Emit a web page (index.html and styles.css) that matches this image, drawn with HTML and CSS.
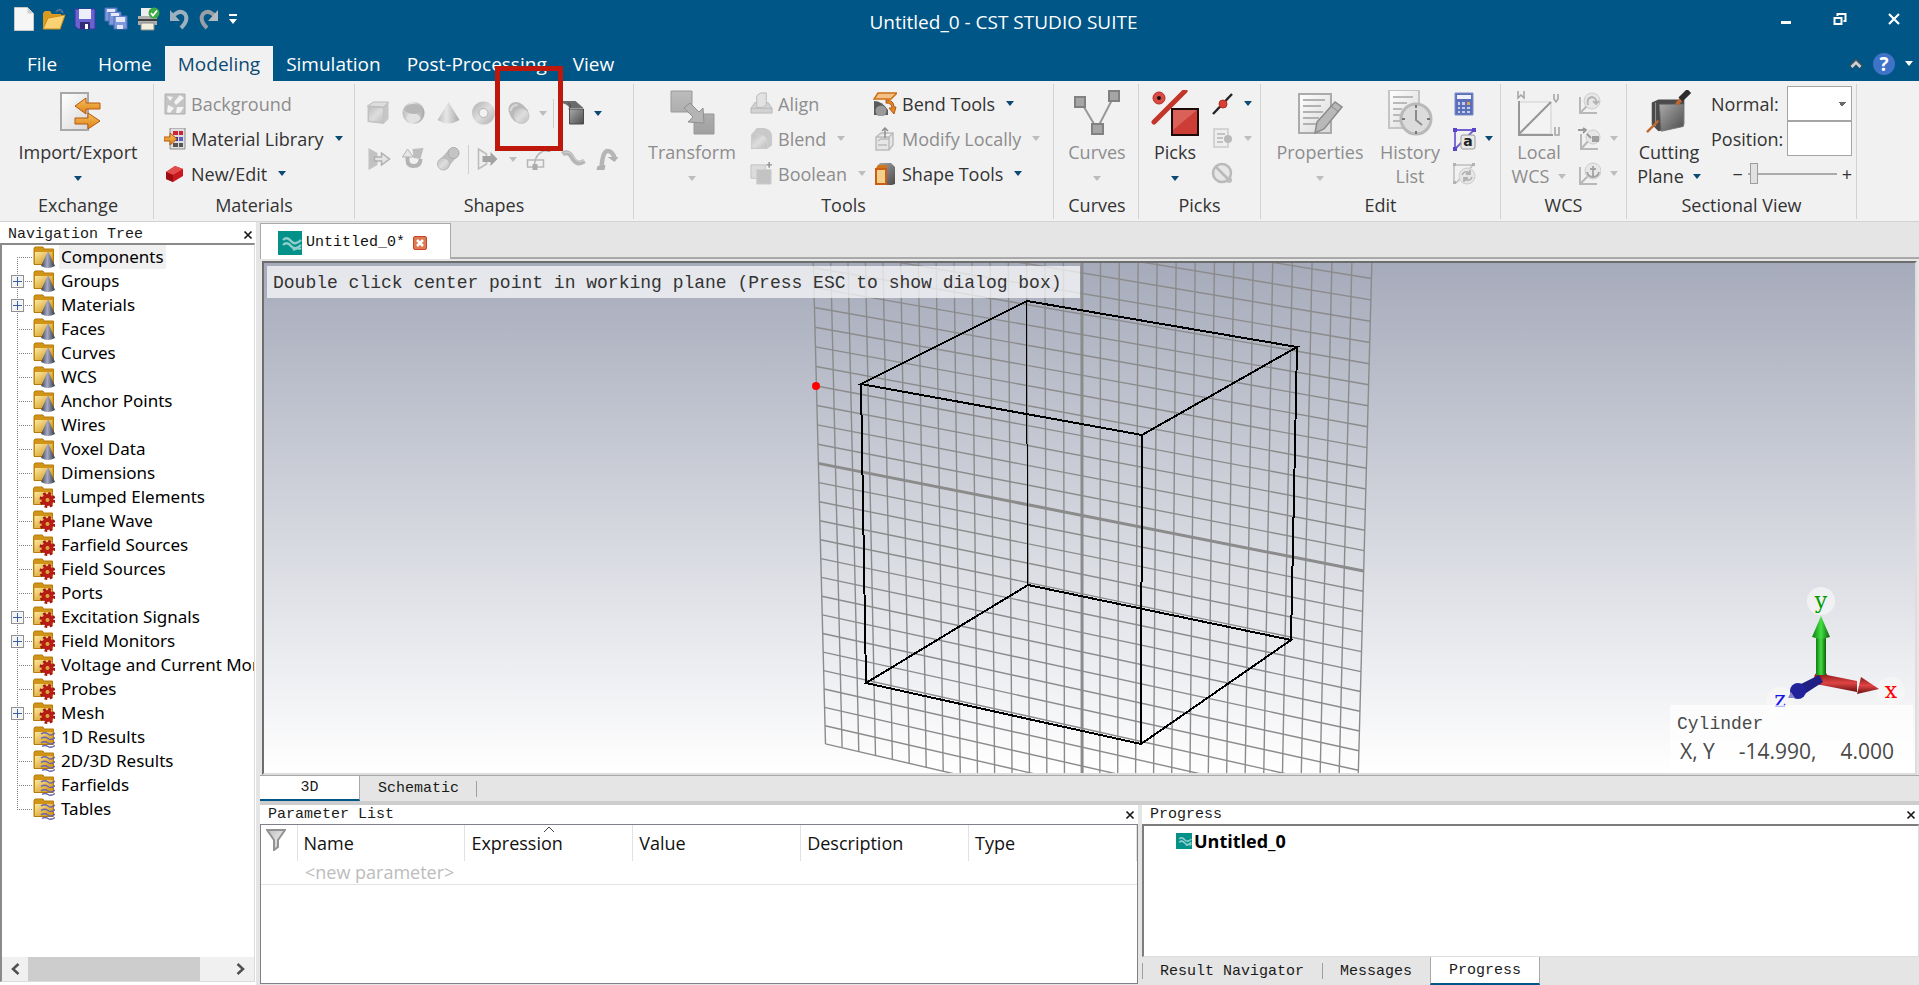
FILE: index.html
```
<!DOCTYPE html>
<html lang="en">
<head>
    <meta charset="UTF-8">
    <meta name="viewport" content="width=device-width, initial-scale=1.0">
    <title>Untitled_0 - CST STUDIO SUITE</title>
    <link rel="stylesheet" href="styles.css">
</head>
<body>
    <!-- shared gradients and symbols -->
    <svg class="defs" width="0" height="0" aria-hidden="true">
        <defs>
            <linearGradient id="g-light" x1="0" y1="0" x2="1" y2="1"><stop offset="0" stop-color="#bdbdbd"/><stop offset="0.5" stop-color="#dedede"/><stop offset="1" stop-color="#bcbcbc"/></linearGradient>
            <linearGradient id="g-side" x1="0" y1="0" x2="1" y2="0"><stop offset="0" stop-color="#bebebe"/><stop offset="0.4" stop-color="#e6e6e6"/><stop offset="1" stop-color="#a9a9a9"/></linearGradient>
            <linearGradient id="g-mid" x1="0" y1="0" x2="0" y2="1"><stop offset="0" stop-color="#bcbcbc"/><stop offset="1" stop-color="#a0a0a0"/></linearGradient>
            <linearGradient id="g-dark" x1="0" y1="0" x2="1" y2="1"><stop offset="0" stop-color="#aaaaaa"/><stop offset="1" stop-color="#4c4c4c"/></linearGradient>
            <linearGradient id="g-paper" x1="0" y1="0" x2="1" y2="1"><stop offset="0" stop-color="#ffffff"/><stop offset="1" stop-color="#d8d8d8"/></linearGradient>
            <linearGradient id="g-orange" x1="0" y1="0" x2="0" y2="1"><stop offset="0" stop-color="#f5bf5c"/><stop offset="1" stop-color="#dc8316"/></linearGradient>
            <linearGradient id="g-folder" x1="0" y1="0" x2="1" y2="1"><stop offset="0" stop-color="#fbe9a6"/><stop offset="1" stop-color="#cf8f08"/></linearGradient>
            <linearGradient id="g-cone" x1="0" y1="0" x2="1" y2="0"><stop offset="0" stop-color="#3e4047"/><stop offset="0.45" stop-color="#a5aac6"/><stop offset="1" stop-color="#34363c"/></linearGradient>
            <linearGradient id="g-sky" x1="0" y1="0" x2="0" y2="1"><stop offset="0" stop-color="#a6abbb"/><stop offset="1" stop-color="#ffffff"/></linearGradient>
            <linearGradient id="g-green" x1="0" y1="0" x2="1" y2="0"><stop offset="0" stop-color="#127a12"/><stop offset="0.5" stop-color="#41e041"/><stop offset="1" stop-color="#0c5e0c"/></linearGradient>
            <linearGradient id="g-red" x1="0" y1="0" x2="0" y2="1"><stop offset="0" stop-color="#8c1c1c"/><stop offset="0.5" stop-color="#e04444"/><stop offset="1" stop-color="#6a1010"/></linearGradient>
            <symbol id="folder-cone" viewBox="0 0 22 22">
                <path d="M1 2.500L2 1h8l1 2h9.500v15.500H1z" fill="#d29416" stroke="#b57a08"/>
                <path d="M2 6h17.500v12L2 18z" fill="url(#g-folder)"/>
                <path d="M15 5L22 20q-7 4-14 0z" fill="url(#g-cone)"/>
            </symbol>
            <symbol id="folder-gear" viewBox="0 0 22 22">
                <path d="M.5 2.500L1.500 1h8l1 2h9v15.500H.5z" fill="#d29416" stroke="#b57a08"/>
                <path d="M1.500 6H19v12H1.500z" fill="url(#g-folder)"/>
                <circle cx="14.500" cy="14" r="6.500" fill="none" stroke="#a51410" stroke-width="3" stroke-dasharray="2.600 2.505"/>
                <circle cx="14.500" cy="14" r="4" fill="none" stroke="#b81c17" stroke-width="4"/>
            </symbol>
            <symbol id="folder-wave" viewBox="0 0 22 22">
                <path d="M1 2.500L2 1h8l1 2h9.500v15.500H1z" fill="#d29416" stroke="#b57a08"/>
                <path d="M2 6h17.500v12L2 18z" fill="url(#g-folder)"/>
                <path d="M8 8q3.500-2.500 7 0t7-1M8 12.500q3.500-2.500 7 0t7-1M8 17q3.500-2.500 7 0t7-1M9 20.500q3-2 6 0t7-1" fill="none" stroke="#6c66ae" stroke-width="1.400"/>
            </symbol>
            <symbol id="logo" viewBox="0 0 24 24">
                <path d="M0 0h24v24H0z" fill="#04918a"/>
                <path d="M5 9q4-4 8 1t10-1M5 14q4-4 8 1t10-1M15 19q4-3 8-1" fill="none" stroke="#8fcfcb" stroke-width="2.400"/>
            </symbol>
            <symbol id="cross" viewBox="0 0 10 10"><path d="M1.500 1.500l7 7M8.500 1.500l-7 7" fill="none" stroke="currentColor" stroke-width="1.700"/></symbol>
        </defs>
    </svg>

    <header class="titlebar">
        <div class="caption">
            <div class="quick">
                <button aria-label="New"><svg width="20" height="24" viewBox="0 0 20 24"><path d="M.5.500h13l6 6v17H.5z" fill="#f6f6f6" stroke="#c9c9c9"/><path d="M13.500.500v6h6z" fill="#cfcfcf"/></svg></button>
                <button aria-label="Open"><svg width="24" height="24" viewBox="0 0 24 24"><path d="M1 22V6l2-2h5l2 3h9v15z" fill="#d99a20"/><path d="M1 22L6 11l17-3-5 14z" fill="#f9d273" stroke="#cf8c12"/><path d="M14 5q4-5 7 1" fill="none" stroke="#4a7598" stroke-width="2"/></svg></button>
                <button aria-label="Save"><svg width="22" height="22" viewBox="0 0 22 22"><path d="M1 1h20v20H4l-3-3z" fill="#6a62cf" stroke="#3c349c"/><path d="M5 1h12v10H5z" fill="#edf0fb"/><path d="M6 14h10v7H6z" fill="#332b78"/><path d="M11 16h3v5h-3z" fill="#fff"/></svg></button>
                <button aria-label="Save all"><svg width="24" height="24" viewBox="0 0 24 24"><g stroke="#4e6fc0" fill="#7f97db"><path d="M1 1h12v13H1z"/><path d="M5 5h12v13H5z"/><path d="M10 9h13v13H10z"/></g><path d="M3 2h8v3H3zM7 6h8v3H7zM12 10h9v5h-9zM13 18h6v4h-6z" fill="#e4e9fa"/></svg></button>
                <button aria-label="Print"><svg width="24" height="24" viewBox="0 0 24 24"><path d="M5 1h11v9H5z" fill="#eee"/><path d="M2 9h19v9H2z" fill="#aeaeae"/><path d="M2 12h19v2H2z" fill="#3e3e3e"/><path d="M5 16h13v7H5z" fill="#f2efdc" stroke="#888"/><circle cx="18" cy="6" r="5.500" fill="#3cab43"/><path d="M15 6l2 2.500 4-5" fill="none" stroke="#fff" stroke-width="1.800"/></svg></button>
                <button aria-label="Undo"><svg width="22" height="22" viewBox="0 0 22 22"><path d="M5 8q7-7 12-2 4 6-4 14" fill="none" stroke="#9db0bd" stroke-width="4"/><path d="M2 2v11h10z" fill="#9db0bd"/></svg></button>
                <button aria-label="Redo"><svg width="22" height="22" viewBox="0 0 22 22"><path d="M17 8q-7-7-12-2-4 6 4 14" fill="none" stroke="#9a9fa5" stroke-width="4"/><path d="M20 2v11H10z" fill="#b4bac0"/></svg></button>
                <button aria-label="Customize toolbar"><svg width="10" height="12" viewBox="0 0 10 12"><path d="M1 1h8v2H1zM1 6h8L5 11z" fill="#fff"/></svg></button>
            </div>
            <h1 class="title">Untitled_0 - CST STUDIO SUITE</h1>
            <div class="window-buttons">
                <button aria-label="Minimize"><svg width="14" height="14" viewBox="0 0 14 14"><path d="M2 9h10v3H2z" fill="#fff"/></svg></button>
                <button aria-label="Restore"><svg width="14" height="14" viewBox="0 0 14 14"><path d="M4.500 4V2h8v7h-2M1.500 6h7v6h-7zM1 6h8M4 2h9" fill="none" stroke="#fff" stroke-width="2"/></svg></button>
                <button aria-label="Close"><svg width="14" height="14" viewBox="0 0 14 14"><path d="M2 2l10 10M12 2L2 12" stroke="#fff" stroke-width="2.200"/></svg></button>
            </div>
        </div>
        <nav class="tabs">
            <a class="tab file" href="#">File</a>
            <a class="tab" href="#">Home</a>
            <a class="tab active" href="#">Modeling</a>
            <a class="tab" href="#">Simulation</a>
            <a class="tab" href="#">Post-Processing</a>
            <a class="tab" href="#">View</a>
            <div class="help">
                <button aria-label="Collapse ribbon"><svg width="14" height="12" viewBox="0 0 14 12"><path d="M2 9l5-5 5 5" fill="none" stroke="#4e4e4e" stroke-width="5"/><path d="M2.500 9L7 4.500 11.500 9" fill="none" stroke="#c3d6e0" stroke-width="2.500"/></svg></button>
                <button aria-label="Help" class="help-icon">?</button>
                <button aria-label="Help menu"><svg width="8" height="5" viewBox="0 0 8 5"><path d="M0 0h8L4 5z" fill="#fff"/></svg></button>
            </div>
        </nav>
    </header>

    <section class="ribbon">
        <div class="group g-exchange">
            <div class="group-body">
                <button class="big wide">
                    <svg width="46" height="46" viewBox="0 0 46 46"><path d="M6 3h27v37H6z" fill="url(#g-paper)" stroke="#a8a8a8" stroke-width="2"/><path d="M45 13H31V8l-11 8 11 8v-5h14z" fill="url(#g-orange)" stroke="#b9560e"/><path d="M20 28h13v-5l12 8-12 8v-5H20z" fill="url(#g-orange)" stroke="#b9560e"/></svg>
                    <span>Import/Export</span>
                    <i class="caret low"></i>
                </button>
            </div>
            <h2>Exchange</h2>
        </div>

        <div class="group g-materials">
            <div class="group-body">
                <div class="stack">
                    <button class="row" disabled><svg width="22" height="22" viewBox="0 0 22 22"><path d="M1 1h20v20H1z" fill="#c4c4c4" stroke="#b0b0b0"/><path d="M3 3l6 1-3 4zM10 9l6-7 4 3-8 7zM4 12l6 3-4 5-3-1zM13 14h7l-4 6h-4z" fill="#f4f4f4"/></svg><span>Background</span></button>
                    <button class="row"><svg width="22" height="22" viewBox="0 0 22 22"><path d="M6 0h15v21H6z" fill="#dedede" stroke="#8c8c8c"/><path d="M9 3h5v4H9zM15 3h4v4h-4z" fill="#cb2433"/><path d="M9 9h5v4H9z" fill="#3a3a9a"/><path d="M15 9h4v4h-4z" fill="#5960bd"/><path d="M9 15h5v4H9zM15 15h4v4h-4z" fill="#555"/><path d="M0 9h6V5l7 6-7 6v-4H0z" fill="url(#g-orange)" stroke="#b9560e"/></svg><span>Material Library</span><i class="caret"></i></button>
                    <button class="row"><svg width="22" height="22" viewBox="0 0 22 22"><path d="M2 9l9-6 8 3v7l-10 6-7-3z" fill="#c81820"/><path d="M2 9l9-6 8 3-10 6z" fill="#e24c4c"/><path d="M2 9l7 3v7l-7-3z" fill="#9e0d14"/></svg><span>New/Edit</span><i class="caret"></i></button>
                </div>
            </div>
            <h2>Materials</h2>
        </div>

        <div class="group g-shapes">
            <div class="group-body">
                <div class="shape-rows">
                    <div class="shape-row">
                        <button class="tool" disabled aria-label="Brick"><svg width="24" height="24" viewBox="0 0 24 24"><path d="M1 5l6-4h15v17l-5 5L1 21z" fill="#c6c6c6"/><path d="M1 5l6-4h15l-5 5z" fill="#dedede" stroke="#bbb"/><path d="M2 6l15 1v15L2 20z" fill="url(#g-light)" stroke="#c2c2c2"/></svg></button>
                        <button class="tool" disabled aria-label="Sphere"><svg width="24" height="24" viewBox="0 0 24 24"><circle cx="12" cy="12" r="11" fill="url(#g-side)"/><ellipse cx="12" cy="8" rx="9" ry="5" fill="#b7b7b7"/><ellipse cx="12" cy="17" rx="7" ry="4" fill="#e2e2e2"/></svg></button>
                        <button class="tool" disabled aria-label="Cone"><svg width="24" height="24" viewBox="0 0 24 24"><path d="M12 1l11 18q-11 7-22 0z" fill="url(#g-side)"/></svg></button>
                        <button class="tool" disabled aria-label="Torus"><svg width="24" height="24" viewBox="0 0 24 24"><circle cx="12" cy="12" r="8" fill="none" stroke="url(#g-light)" stroke-width="7"/><circle cx="12" cy="12" r="4.500" fill="none" stroke="#b5b5b5"/></svg></button>
                        <button class="tool" disabled aria-label="Cylinder"><svg width="24" height="24" viewBox="0 0 24 24"><path d="M2 9q0-8 8-8 5 0 12 9L9 21Q3 16 2 9z" fill="#bababa"/><path d="M4 10q1-6 7-6" fill="none" stroke="#d9d9d9" stroke-width="2"/><circle cx="15" cy="15" r="7.500" fill="url(#g-light)" stroke="#c6c6c6"/></svg><i class="caret"></i></button>
                        <i class="divider"></i>
                        <button class="tool" aria-label="Sheet bend"><svg width="24" height="24" viewBox="0 0 24 24"><path d="M0 0h14l8 7H8Q6 3 0 2z" fill="#6b6b6b"/><path d="M7 8q4-2 0-6" fill="none" stroke="#444"/><path d="M8 8h14v15H8z" fill="url(#g-dark)" stroke="#4a4a4a"/></svg><i class="caret"></i></button>
                    </div>
                    <div class="shape-row">
                        <button class="tool" disabled aria-label="Extrude"><svg width="24" height="24" viewBox="0 0 24 24"><path d="M2 1l9 5v12l-9 5z" fill="#c2c2c2"/><path d="M8 10h7V6l8 6-8 6v-4H8z" fill="#e4e4e4" stroke="#b0b0b0" stroke-width="1.500"/></svg></button>
                        <button class="tool" disabled aria-label="Rotate"><svg width="24" height="24" viewBox="0 0 24 24"><path d="M11 2l11-1-3 11-7-1z" fill="#bdbdbd"/><path d="M6 8v5q0 6 6 6 7 0 7-7" fill="none" stroke="#b4b4b4" stroke-width="4"/><path d="M1 10l5-8 6 8z" fill="#e6e6e6" stroke="#b4b4b4"/></svg></button>
                        <button class="tool" disabled aria-label="Loft"><svg width="24" height="24" viewBox="0 0 24 24"><path d="M2 14L13 2l9 6-12 14z" fill="#bebebe"/><circle cx="17" cy="6" r="5.500" fill="#c4c4c4" stroke="#aaa"/><circle cx="7" cy="17" r="6" fill="url(#g-light)" stroke="#b8b8b8"/></svg></button>
                        <i class="divider"></i>
                        <button class="tool" disabled aria-label="Extrude face"><svg width="24" height="24" viewBox="0 0 24 24"><path d="M2 2l8 5v10l-8 5z" fill="#eee" stroke="#bcbcbc" stroke-width="1.500"/><path d="M6 9h8V5l7 7-7 7v-4H6z" fill="#a3a3a3"/></svg><i class="caret"></i></button>
                        <button class="tool" disabled aria-label="Trace"><svg width="24" height="24" viewBox="0 0 24 24"><path d="M8 17Q9 5 21 3" fill="none" stroke="#b6b6b6" stroke-width="1.500"/><path d="M1 13h16v7H1z" fill="none" stroke="#b6b6b6" stroke-width="1.500"/><path d="M6 17h5v6H6zM20 1h4v4h-4z" fill="#ababab"/></svg></button>
                        <button class="tool" disabled aria-label="Wire"><svg width="24" height="24" viewBox="0 0 24 24"><path d="M1 7q6-4 10 4t12 3" fill="none" stroke="#b6b6b6" stroke-width="5"/><path d="M2 6q6-3 10 4t11 3" fill="none" stroke="#d3d3d3"/></svg></button>
                        <button class="tool" disabled aria-label="Bond wire"><svg width="24" height="24" viewBox="0 0 24 24"><path d="M5 21Q6 4 11 4q5 0 7 7" fill="none" stroke="#b6b6b6" stroke-width="4.500"/><path d="M1 19l8-1-1 5H0zM11 10h11l-4 5z" fill="#b1b1b1"/></svg></button>
                    </div>
                </div>
            </div>
            <h2>Shapes</h2>
            <div class="highlight"></div>
        </div>

        <div class="group g-tools">
            <div class="group-body">
                <button class="big" disabled>
                    <svg width="46" height="46" viewBox="0 0 46 46"><path d="M2 1h21v21H2zM25 24h20v20H25z" fill="url(#g-mid)" stroke="#999"/><path d="M15 18l6-5 9 9 4-4 1 15-16-1 5-5z" fill="#b4b4b4" stroke="#8f8f8f"/></svg>
                    <span>Transform</span>
                    <i class="caret low"></i>
                </button>
                <div class="stack align">
                    <button class="row" disabled><svg width="23" height="23" viewBox="0 0 24 24"><path d="M1 17l4-6h14l4 6v5H1z" fill="#d2d2d2" stroke="#b9b9b9"/><path d="M1 17h22" stroke="#b9b9b9"/><path d="M7 4l4-3h6v12l-3 3H7z" fill="#e2e2e2" stroke="#b9b9b9"/></svg><span>Align</span></button>
                    <button class="row" disabled><svg width="23" height="23" viewBox="0 0 24 24"><path d="M1 8l6-7h8q8 2 8 9v9l-5 4H1z" fill="#c9c9c9"/><path d="M2 8h9q7 1 7 8v6H2z" fill="url(#g-light)" stroke="#d0d0d0"/></svg><span>Blend</span><i class="caret"></i></button>
                    <button class="row" disabled><svg width="23" height="23" viewBox="0 0 24 24"><path d="M1 3h15v14H1z" fill="#dcdcdc" stroke="#c2c2c2"/><path d="M7 8h15v15H7z" fill="#c3c3c3" stroke="#cfcfcf"/><path d="M20 0v6M17 3h6" stroke="#8e8e8e" stroke-width="1.500"/></svg><span>Boolean</span><i class="caret"></i></button>
                </div>
                <div class="stack">
                    <button class="row"><svg width="24" height="24" viewBox="0 0 24 24"><path d="M5 1h19l-6 6H1z" fill="#f2c188" stroke="#cf6c10" stroke-width="1.500"/><path d="M1 9q8 0 14 9v5H1z" fill="#5b5b5b"/><circle cx="8" cy="19" r="5.500" fill="#9a9a9a"/><path d="M13 11q6 0 6 5h-3l5 6 2-7h-2q0-7-8-7z" fill="#e08826" stroke="#b9560e"/></svg><span>Bend Tools</span><i class="caret"></i></button>
                    <button class="row" disabled><svg width="24" height="24" viewBox="0 0 24 24"><path d="M3 10l5-4h12v12l-4 5H3zM3 10h13l4-4M16 10v13M5 14l3-2h8M5 18h9" fill="#e6e6e6" stroke="#bcbcbc" stroke-width="1.500"/><path d="M12 11V2M9 4l3-3 3 3" fill="none" stroke="#8f8f8f" stroke-width="1.500"/></svg><span>Modify Locally</span><i class="caret"></i></button>
                    <button class="row"><svg width="24" height="24" viewBox="0 0 24 24"><path d="M4 4l3-3h11l4 4v17l-3 1H4z" fill="url(#g-dark)"/><path d="M5 3h9v3H3z" fill="#d0771c"/><path d="M3 7h10v15H3z" fill="#f3cf8c" stroke="#cb5d14" stroke-width="2"/></svg><span>Shape Tools</span><i class="caret"></i></button>
                </div>
            </div>
            <h2>Tools</h2>
        </div>

        <div class="group g-curves">
            <div class="group-body">
                <button class="big wide" disabled>
                    <svg width="46" height="46" viewBox="0 0 46 46"><path d="M7 12l16 27L40 6" fill="none" stroke="#989898" stroke-width="2"/><path d="M1 7h10v10H1zM35 1h10v10H35zM18 34h11v10H18z" fill="#a5a5a5" stroke="#818181" stroke-width="2"/></svg>
                    <span>Curves</span>
                    <i class="caret low"></i>
                </button>
            </div>
            <h2>Curves</h2>
        </div>

        <div class="group g-picks">
            <div class="group-body">
                <button class="big">
                    <svg width="48" height="46" viewBox="0 0 48 46"><path d="M3 32L34 1" stroke="#c33529" stroke-width="5" stroke-linecap="round"/><circle cx="8" cy="8" r="6" fill="#dc4b43" stroke="#b52a22"/><circle cx="8" cy="8" r="2" fill="#111"/><path d="M21 19h26v26H21z" fill="#cc3d36" stroke="#1c0a0a" stroke-width="2"/><path d="M22 20h24L22 40z" fill="#dc6a60" opacity=".8"/></svg>
                    <span>Picks</span>
                    <i class="caret low"></i>
                </button>
                <div class="stack icons">
                    <button class="row" aria-label="Pick point"><svg width="24" height="24" viewBox="0 0 24 24"><path d="M2 22L21 2" stroke="#262626" stroke-width="2.500"/><circle cx="12" cy="12" r="4" fill="#d94034" stroke="#b52a22"/></svg><i class="caret"></i></button>
                    <button class="row" disabled aria-label="Pick list"><svg width="24" height="24" viewBox="0 0 24 24"><path d="M3 2h14v18H3z" fill="#eee" stroke="#cacaca" stroke-width="1.500"/><path d="M6 7h8M6 11h6M6 15h6" stroke="#b5b5b5" stroke-width="1.500"/><circle cx="17" cy="12" r="4" fill="#b9b9b9"/></svg><i class="caret"></i></button>
                    <button class="row" disabled aria-label="Clear picks"><svg width="24" height="24" viewBox="0 0 24 24"><circle cx="11" cy="11" r="9" fill="#e6e6e6" stroke="#b9b9b9" stroke-width="2.500"/><path d="M5 5l12 12" stroke="#b9b9b9" stroke-width="2.500"/><circle cx="18" cy="18" r="3" fill="#bdbdbd"/></svg></button>
                </div>
            </div>
            <h2>Picks</h2>
        </div>

        <div class="group g-edit">
            <div class="group-body">
                <button class="big" disabled>
                    <svg width="46" height="46" viewBox="0 0 46 46"><path d="M2 4h32v39H2z" fill="url(#g-paper)" stroke="#ababab" stroke-width="2"/><path d="M6 10h22M6 16h18M6 22h20M6 28h16M6 34h13" stroke="#b2b2b2" stroke-width="2"/><path d="M18 43l2-11 18-20 7 5-18 22z" fill="#b8b8b8" stroke="#8b8b8b" stroke-width="1.500"/><path d="M34 16l8 6" stroke="#888"/></svg>
                    <span>Properties</span>
                    <i class="caret low"></i>
                </button>
                <button class="big" disabled>
                    <svg width="46" height="46" viewBox="0 0 46 46"><path d="M2 0h30v38H2z" fill="url(#g-paper)" stroke="#c4c4c4" stroke-width="2"/><path d="M6 7h20M6 13h14M6 19h9M6 25h7M6 31h7" stroke="#b9b9b9" stroke-width="2"/><circle cx="29" cy="29" r="15" fill="#dcdcdc" stroke="#b9b9b9" stroke-width="3"/><path d="M29 20v10l6 5" fill="none" stroke="#8c8c8c" stroke-width="2"/><path d="M29 15v3M29 41v3M15 29h3M40 29h3" stroke="#777" stroke-width="2"/></svg>
                    <span>History</span>
                    <span>List</span>
                </button>
                <div class="stack icons">
                    <button class="row" aria-label="Calculator"><svg width="24" height="24" viewBox="0 0 24 24"><path d="M3 1h18v22H3z" fill="#5a6fb8" stroke="#7d8cc8"/><path d="M5 3h14v4H5z" fill="#eef1fb"/><path d="M6 10h2v3H6zM10 10h3v3h-3zM6 15h2v2H6zM10 15h3v2h-3zM15 15h3v2h-3zM6 19h2v2H6zM10 19h3v2h-3zM15 19h3v2h-3z" fill="#c5cdee"/><path d="M15 10h3v3h-3z" fill="#e0a35c"/></svg></button>
                    <button class="row" aria-label="Parametric update"><svg width="24" height="24" viewBox="0 0 24 24"><path d="M3 21V3h19L4 21" fill="none" stroke="#6f5fd0" stroke-width="1.800"/><path d="M1 1h4v4H1zM20 1h4v4h-4zM1 20h4v4H1z" fill="#5847c4"/><rect x="9" y="8" width="14" height="14" rx="2" fill="#e9e9e9" stroke="#999"/><text x="16" y="19" class="glyph-a">a</text></svg><i class="caret"></i></button>
                    <button class="row" disabled aria-label="Update"><svg width="24" height="24" viewBox="0 0 24 24"><path d="M2 21V3h19L4 21" fill="none" stroke="#bdbdbd" stroke-width="1.500"/><path d="M1 1h3v3H1zM20 1h3v3h-3zM1 19h3v3H1z" fill="#b2b2b2"/><circle cx="15" cy="14" r="8" fill="#e6e6e6" stroke="#cdcdcd"/><path d="M10 13q2-5 8-2M20 15q-2 5-8 2M18 8v4h-4M12 20v-4h4" fill="none" stroke="#b2b2b2" stroke-width="1.800"/></svg></button>
                </div>
            </div>
            <h2>Edit</h2>
        </div>

        <div class="group g-wcs">
            <div class="group-body">
                <button class="big" disabled>
                    <svg width="46" height="46" viewBox="0 0 46 46"><path d="M3 12h32v32H3z" fill="#f3f3f3" stroke="#cfcfcf"/><path d="M3 11v34h34M3 44L35 12" fill="none" stroke="#979797" stroke-width="2"/><path d="M2 1v7l3-3 3 3V1M38 4v5l2 3 2-3V4M39 37v8h4v-8" fill="none" stroke="#a3a3a3" stroke-width="1.500"/></svg>
                    <span>Local</span>
                    <span class="line">WCS<i class="caret"></i></span>
                </button>
                <div class="stack icons">
                    <button class="row" disabled aria-label="Rotate WCS"><svg width="24" height="24" viewBox="0 0 24 24"><path d="M3 5v16h17M3 21L14 10" fill="none" stroke="#b8b8b8" stroke-width="2"/><circle cx="15" cy="9" r="8" fill="#e7e7e7" stroke="#cdcdcd"/><path d="M11 13q-2-7 4-8 5 1 4 6M16 9l3 3 3-3" fill="none" stroke="#b3b3b3" stroke-width="1.800"/></svg></button>
                    <button class="row" disabled aria-label="Align WCS"><svg width="24" height="24" viewBox="0 0 24 24"><path d="M4 7v15h17M4 22L13 12" fill="none" stroke="#b8b8b8" stroke-width="2"/><circle cx="16" cy="10" r="7" fill="#e7e7e7" stroke="#cdcdcd"/><path d="M1 3h8M6 1l3 2-3 3M10 7l4 4" fill="none" stroke="#999" stroke-width="1.800"/><path d="M15 9h7v6h-7z" fill="#9f9f9f"/></svg><i class="caret"></i></button>
                    <button class="row" disabled aria-label="Anchor WCS"><svg width="24" height="24" viewBox="0 0 24 24"><path d="M3 5v17h17M3 22L14 11" fill="none" stroke="#b8b8b8" stroke-width="2"/><circle cx="16" cy="9" r="8" fill="#e7e7e7" stroke="#cdcdcd"/><path d="M16 4v10M13 7h6M10 10q1 5 6 5t6-5" fill="none" stroke="#a2a2a2" stroke-width="1.800"/></svg><i class="caret"></i></button>
                </div>
            </div>
            <h2>WCS</h2>
        </div>

        <div class="group g-section">
            <div class="group-body">
                <button class="big">
                    <svg width="48" height="48" viewBox="0 0 48 48"><path d="M6 13l7-3h27v26l-27 7-7-7z" fill="#4a4a4a"/><path d="M14 15h25v23l-23 5z" fill="url(#g-dark)" stroke="#777"/><path d="M10 13v25" stroke="#999"/><path d="M32 15l6-7" stroke="#c0672f" stroke-width="4"/><path d="M36 10l9-9" stroke="#2d2d2d" stroke-width="6"/><path d="M1 44l12-12" stroke="#c0672f" stroke-width="2.500"/></svg>
                    <span>Cutting</span>
                    <span class="line">Plane<i class="caret"></i></span>
                </button>
                <div class="section-form">
                    <label for="normal">Normal:</label>
                    <select id="normal"><option></option></select>
                    <label for="position">Position:</label>
                    <input id="position" type="text">
                    <div class="slider">
                        <span>−</span>
                        <input type="range" min="0" max="100" value="3" aria-label="Cutting plane position">
                        <span>+</span>
                    </div>
                </div>
            </div>
            <h2>Sectional View</h2>
        </div>
    </section>

    <div class="workspace">
        <aside class="nav">
            <div class="panel-title"><span>Navigation Tree</span><button aria-label="Close"><svg width="10" height="10"><use href="#cross"/></svg></button></div>
            <div class="tree-box">
                <ul class="tree" id="tree"></ul>
                <div class="hscroll">
                    <button aria-label="Scroll left"><svg width="10" height="12" viewBox="0 0 10 12"><path d="M8.500 1L3 6l5.500 5" fill="none" stroke="#505050" stroke-width="2.500"/></svg></button>
                    <div class="track"><div class="thumb"></div></div>
                    <button aria-label="Scroll right"><svg width="10" height="12" viewBox="0 0 10 12"><path d="M1.500 1L7 6l-5.500 5" fill="none" stroke="#505050" stroke-width="2.500"/></svg></button>
                </div>
            </div>
        </aside>

        <main class="main">
            <div class="doc-tabs">
                <div class="doc-tab">
                    <svg width="24" height="24"><use href="#logo"/></svg>
                    <span>Untitled_0*</span>
                    <button aria-label="Close document"><svg width="14" height="14" viewBox="0 0 14 14"><rect x=".5" y=".5" width="13" height="13" rx="1.500" fill="#dd7a52" stroke="#c9432b"/><path d="M4 4l6 6M10 4l-6 6" stroke="#fff" stroke-width="2.500"/></svg></button>
                </div>
            </div>

            <div class="viewport">
                <svg class="scene" viewBox="264 263 1651 510" preserveAspectRatio="xMidYMin slice">
                    <rect x="0" y="263" width="2400" height="510" fill="url(#g-sky)"/>
                    <g id="grid" class="grid"></g>
                    <!-- bounding box -->
                    <g class="bbox">
                        <path class="thin" d="M1026 301L1028 585"/>
                        <path d="M861 384L1027 301L1297 347L1142 435ZM866 683L1028 585L1291 640L1141 744ZM861 384L866 683M1142 435L1141 744M1297 347L1291 640"/>
                    </g>
                    <circle cx="816" cy="386" r="4" fill="#ff0000"/>
                    <!-- axis triad -->
                    <g class="halo"><circle cx="1821" cy="601" r="14"/><circle cx="1891" cy="691" r="14"/><circle cx="1780" cy="701" r="14"/></g>
                    <circle cx="1821" cy="678" r="7" fill="#9c2020"/>
                    <path d="M1822 674l35 7v11l-36-7z" fill="url(#g-red)"/>
                    <path d="M1861 677l18 12-22 5z" fill="url(#g-red)"/>
                    <path d="M1816 637h10v38h-10z" fill="url(#g-green)"/>
                    <path d="M1821 616l9 21q-9 3-18 0z" fill="url(#g-green)"/>
                    <path d="M1819 675l4 7-20 13-6-9z" fill="#1f1f84"/>
                    <circle cx="1798" cy="691" r="8" fill="#22229a"/>
                    <path d="M1791 692l4 6-7 0z" fill="#8585c8"/>
                    <text x="1821" y="608" fill="#009a00">y</text>
                    <text x="1891" y="698" fill="#ff0000">x</text>
                    <text x="1780" y="707" fill="#1414e6">z</text>
                </svg>
                <p class="hint">Double click center point in working plane (Press ESC to show dialog box)</p>
                <div class="readout">
                    <p class="shape-name">Cylinder</p>
                    <p class="coords"><span>X, Y</span><span>-14.990,</span><span>4.000</span></p>
                </div>
            </div>

            <div class="view-tabs">
                <button class="view-tab active">3D</button>
                <button class="view-tab">Schematic</button>
            </div>

            <div class="panels">
                <section class="panel params">
                    <div class="panel-title"><span>Parameter List</span><button aria-label="Close"><svg width="10" height="10"><use href="#cross"/></svg></button></div>
                    <div class="panel-box">
                        <table>
                            <thead>
                                <tr>
                                    <th class="filter"><svg width="20" height="22" viewBox="0 0 20 22"><path d="M1 1h18l-7 10v7l-4 3V11z" fill="url(#g-light)" stroke="#929292" stroke-width="2"/></svg></th>
                                    <th>Name</th>
                                    <th class="sorted">Expression<svg class="sort-mark" width="12" height="6" viewBox="0 0 12 6"><path d="M1 6l5-5 5 5" fill="none" stroke="#444"/></svg></th>
                                    <th>Value</th>
                                    <th>Description</th>
                                    <th>Type</th>
                                </tr>
                            </thead>
                            <tbody>
                                <tr><td></td><td>&lt;new parameter&gt;</td><td></td><td></td><td></td><td></td></tr>
                            </tbody>
                        </table>
                    </div>
                </section>
                <section class="panel progress">
                    <div class="panel-title"><span>Progress</span><button aria-label="Close"><svg width="10" height="10"><use href="#cross"/></svg></button></div>
                    <div class="panel-box">
                        <div class="job"><svg width="16" height="16"><use href="#logo"/></svg><b>Untitled_0</b></div>
                    </div>
                    <div class="dock-tabs">
                        <button class="dock-tab">Result Navigator</button>
                        <button class="dock-tab">Messages</button>
                        <button class="dock-tab active">Progress</button>
                    </div>
                </section>
            </div>
        </main>
    </div>

    <script src="script.js"></script>
</body>
</html>
```
FILE: styles.css
```
* {
    box-sizing: border-box;
}
body {
    margin: 0;
    min-height: 100vh;
    display: flex;
    flex-direction: column;
    background-color: #e5e5e5;
    color: #333;
    font-family: "Open Sans", "Noto Sans", sans-serif;
    font-size: 18px;
    line-height: 24px;
}
h1, h2, p, ul {
    margin: 0;
    padding: 0;
    font-weight: normal;
    font-size: inherit;
}
button {
    padding: 0;
    border: 0;
    background: none;
    color: inherit;
    font: inherit;
    line-height: inherit;
}
svg {
    display: block;
    flex: none;
}
.defs {
    position: absolute;
}

/* title bar */
.titlebar {
    background-color: #005687;
    color: #fff;
    font-size: 19px;
}
.caption {
    display: flex;
    align-items: center;
    height: 46px;
    padding: 0 18px 8px 14px;
}
.quick {
    display: flex;
    align-items: center;
    gap: 8px;
}
.title {
    flex: 1;
    padding: 6px 10px 0 0;
    text-align: center;
}
.window-buttons {
    display: flex;
    gap: 40px;
}
.tabs {
    display: flex;
    height: 35px;
    padding-left: 14px;
}
.tab {
    padding: 6px 13px 0;
    color: #fff;
    text-decoration: none;
}
.file {
    margin-right: 15px;
}
.tab.active {
    background-color: #f1f1f1;
    color: #0b4a72;
}
.help {
    display: flex;
    align-items: center;
    gap: 10px;
    margin-left: auto;
    padding-right: 6px;
}
.help-icon {
    width: 22px;
    height: 22px;
    border-radius: 11px;
    background-color: #3f73c8;
    font-weight: bold;
    line-height: 20px;
}

/* ribbon */
.ribbon {
    display: flex;
    padding: 3px 0 2px;
    background-color: #f1f1f1;
    border-bottom: 1px solid #d2d2d2;
}
.group {
    display: flex;
    flex-direction: column;
    flex: none;
    padding-top: 2px;
    border-right: 1px solid #d2d2d2;
    position: relative;
}
.group-body {
    display: flex;
    height: 105px;
}
.group h2 {
    padding: 2px 0;
    text-align: center;
}
.g-exchange {
    width: 154px;
    padding-left: 3px;
}
.g-materials { width: 201px; }
.g-shapes { width: 279px; }
.g-tools { width: 420px; }
.g-curves {
    width: 85px;
    padding-left: 2px;
}
.g-picks { width: 122px; }
.g-edit { width: 240px; }
.g-wcs { width: 126px; }
.g-section { width: 230px; }

.big {
    display: flex;
    flex-direction: column;
    align-items: center;
    padding-top: 4px;
    white-space: nowrap;
}
.big > svg {
    height: 50px;
    padding-bottom: 4px;
}
.wide {
    width: 100%;
}
.g-tools .big { width: 116px; }
.g-picks .big { width: 72px; }
.g-edit .big { width: 118px; }
.g-edit .big + .big { width: 62px; }
.g-edit .icons { margin-left: 11px; }
.g-wcs .big { width: 76px; }
.g-section .big { width: 84px; }
button:disabled {
    color: #8d8d8d;
}
.caret {
    flex: none;
    width: 0;
    border: 4px solid transparent;
    border-top: 5px solid #0b4a72;
    border-bottom: 0;
}
:disabled .caret {
    border-top-color: #bdbdbd;
}
.low {
    margin-top: 12px;
}
.line {
    display: flex;
    align-items: center;
    gap: 9px;
}
.stack {
    display: grid;
    grid-template-rows: repeat(3, 35px);
    justify-items: start;
}
.g-materials .stack {
    padding-left: 10px;
}
.align {
    width: 123px;
}
.row {
    display: flex;
    align-items: center;
    gap: 5px;
    white-space: nowrap;
}
.row .caret {
    margin-left: 6px;
}
.icons .caret {
    margin-left: 4px;
}
.shape-rows {
    padding: 4px 0 0 6px;
}
.shape-row {
    display: flex;
    align-items: center;
    height: 46px;
}
.tool {
    display: flex;
    align-items: center;
}
.tool svg {
    width: 35px;
}
.tool .caret {
    margin: 0 4px 0 3px;
}
.divider {
    width: 1px;
    height: 29px;
    margin: 0 2px;
    background-color: #cfcfcf;
}
/* marker frame over the cylinder tool */
.highlight {
    position: absolute;
    left: 140px;
    top: -18px;
    width: 68px;
    height: 85px;
    border: 5px solid #be170b;
}
.glyph-a {
    font: bold 14px "DejaVu Sans", sans-serif;
    text-anchor: middle;
    fill: #222;
}
.section-form {
    display: grid;
    grid-template-columns: 76px 65px;
    grid-template-rows: repeat(3, 35px);
    align-items: center;
}
.section-form select, .section-form input[type="text"] {
    width: 100%;
    height: 35px;
    border: 1px solid #a5a5a5;
    border-radius: 0;
    background-color: #fff;
}
.section-form select {
    appearance: none;
    background-image: conic-gradient(from 315deg at 50% 100%, #6a6a6a 90deg, transparent 0);
    background-size: 8px 4px;
    background-position: right 5px center;
    background-repeat: no-repeat;
}
.slider {
    grid-column: 1 / 3;
    display: flex;
    align-items: center;
    justify-content: flex-end;
    gap: 5px;
}
.slider input {
    appearance: none;
    width: 89px;
    height: 21px;
    margin: 0;
    background: linear-gradient(#ababab, #ababab) center / 100% 2px no-repeat;
}
.slider input::-webkit-slider-thumb {
    appearance: none;
    width: 8px;
    height: 21px;
    background-color: #e1e1e1;
    border: 1px solid #9d9d9d;
}

/* workspace */
.workspace {
    flex: 1;
    display: flex;
    gap: 4px;
}
.nav {
    display: flex;
    flex-direction: column;
    width: 256px;
    flex: none;
    padding-bottom: 3px;
    background-color: #fff;
}
.panel-title {
    display: flex;
    align-items: center;
    justify-content: space-between;
    height: 19px;
    padding: 1px 3px 0 8px;
    background-color: #fff;
    color: #1a1a1a;
    font: 15px/18px "Liberation Mono", monospace;
}
.nav .panel-title {
    height: 21px;
    padding-top: 4px;
}
.tree-box {
    flex: 1;
    display: flex;
    flex-direction: column;
    width: 255px;
    border: 2px solid #8a8a8a;
    border-right: 1px solid #dcdcdc;
    border-bottom: 1px solid #dcdcdc;
}
.tree {
    flex: 1;
    list-style: none;
    overflow: hidden;
    color: #000;
    font-family: "Noto Sans", sans-serif;
    font-size: 17px;
}
.tree li {
    display: flex;
    align-items: center;
    height: 24px;
    white-space: nowrap;
}
.twig {
    flex: none;
    display: flex;
    align-items: center;
    width: 31px;
    height: 24px;
    padding-left: 9px;
    background:
        repeating-linear-gradient(to bottom, #808080 0 1px, transparent 1px 2px) 15px 0 / 1px 24px no-repeat,
        repeating-linear-gradient(to right, #808080 0 1px, transparent 1px 2px) 15px 12px / 16px 1px no-repeat;
}
.tree li:first-child .twig {
    background-position: 15px 12px, 15px 12px;
}
.tree li:last-child .twig {
    background-size: 1px 12px, 16px 1px;
}
.expander {
    width: 13px;
    height: 13px;
    border: 1px solid #919191;
    background:
        linear-gradient(#3c5aa6, #3c5aa6) center / 9px 1px no-repeat,
        linear-gradient(#3c5aa6, #3c5aa6) center / 1px 9px no-repeat,
        #f4f4f4;
}
.tree .label {
    margin-left: 4px;
    padding: 0 2px;
}
.tree .selected {
    background-color: #f0f0f0;
}
.hscroll {
    display: flex;
    height: 24px;
    background-color: #f0f0f0;
}
.hscroll button {
    display: grid;
    place-items: center;
    width: 26px;
}
.track {
    flex: 1;
}
.thumb {
    width: 86%;
    height: 100%;
    background-color: #cdcdcd;
}

/* document area */
.main {
    flex: 1;
    min-width: 0;
    display: flex;
    flex-direction: column;
}
.doc-tabs {
    height: 39px;
    padding-top: 1px;
    background: linear-gradient(#a9a9a9, #a9a9a9) 0 35px / 100% 2px no-repeat;
}
.doc-tab {
    display: flex;
    align-items: center;
    width: 191px;
    height: 36px;
    padding: 2px 0 0 17px;
    border: 1px solid #a9a9a9;
    border-bottom: 0;
    background-color: #fff;
    color: #111;
    font: 15px/18px "Liberation Mono", monospace;
}
.doc-tab span {
    margin: 0 8px 0 4px;
}
.viewport {
    flex: 1;
    min-height: 300px;
    position: relative;
    overflow: hidden;
    border: 2px solid #6d6d6d;
    border-right: 2px solid #ddd;
    border-bottom: 2px solid #ddd;
    margin: 0 2px;
}
.scene {
    position: absolute;
    width: 100%;
    height: 100%;
}
.scene text {
    font: 22px "DejaVu Serif", serif;
    text-anchor: middle;
}
.scene .halo {
    fill: #f8f8f8;
    opacity: 0.7;
}
.grid {
    fill: none;
    stroke: #8b8b8b;
    stroke-width: 1.4;
}
.grid .main-axis {
    stroke-width: 3;
}
.bbox {
    fill: none;
    stroke: #000;
    stroke-width: 2;
    shape-rendering: crispEdges;
}
.bbox .thin {
    stroke-width: 1;
}
.hint {
    position: absolute;
    left: 3px;
    top: 3px;
    padding: 5px 18px 3px 6px;
    background-color: rgba(255, 255, 255, 0.7);
    font: 18px/24px "Liberation Mono", monospace;
}
.readout {
    position: absolute;
    right: 2px;
    bottom: 0;
    width: 243px;
    padding: 6px 7px 8px;
    background-color: rgba(255, 255, 255, 0.7);
    color: #4a4a4a;
}
.shape-name {
    font: 18px/26px "Liberation Mono", monospace;
}
.coords {
    display: flex;
    gap: 24px;
    padding: 0 10px 0 3px;
    font-size: 21px;
    line-height: 28px;
}
.view-tabs {
    display: flex;
    height: 26px;
    border-top: 1px solid #a9a9a9;
}
.view-tab {
    width: 117px;
    color: #1a1a1a;
    font: 15px/18px "Liberation Mono", monospace;
    background: linear-gradient(#a0a0a0, #a0a0a0) right center / 1px 16px no-repeat;
}
.view-tab.active {
    width: 100px;
    background: #fff;
    border-right: 1px solid #a9a9a9;
    border-bottom: 2px solid #005687;
}

/* bottom panels */
.panels {
    display: flex;
    gap: 4px;
    height: 184px;
    border-top: 4px solid #cdcdcd;
}
.panel {
    display: flex;
    flex-direction: column;
}
.params {
    flex: 878;
    padding-bottom: 1px;
}
.progress {
    flex: 777;
}
.panel-box {
    flex: 1;
    min-height: 0;
    border: 1px solid #7f8088;
    background-color: #fff;
}
.progress .panel-box {
    border: 2px solid #7d7d7d;
    border-right: 1px solid #ddd;
    border-bottom: 1px solid #ddd;
}
table {
    width: 100%;
    border-collapse: collapse;
    table-layout: fixed;
    color: #111;
}
th {
    height: 36px;
    padding: 0 6px;
    border-right: 1px solid #e2e2e2;
    font-weight: normal;
    text-align: left;
}
.filter {
    width: 36px;
    vertical-align: top;
    padding: 4px 5px;
}
.sorted {
    position: relative;
}
.sort-mark {
    position: absolute;
    left: 50%;
    top: 1px;
    margin-left: -6px;
}
td {
    height: 23px;
    padding: 0 8px;
    border-bottom: 1px solid #e2e2e2;
    color: #bcbcbc;
    line-height: 22px;
}
.job {
    display: flex;
    align-items: center;
    gap: 2px;
    padding: 3px 32px;
    color: #000;
}
.dock-tabs {
    display: flex;
    height: 28px;
}
.dock-tab {
    padding: 2px 18px 0;
    color: #1a1a1a;
    font: 15px/18px "Liberation Mono", monospace;
    background: linear-gradient(#a0a0a0, #a0a0a0) left center / 1px 16px no-repeat;
}
.dock-tab.active {
    background: #fff;
    border: 1px solid #a9a9a9;
    border-top: 0;
    border-bottom: 2px solid #005687;
}
```
FILE: script.js
```
const tree = [
    ["cone", "Components"], ["cone", "Groups", true], ["cone", "Materials", true],
    ["cone", "Faces"], ["cone", "Curves"], ["cone", "WCS"], ["cone", "Anchor Points"],
    ["cone", "Wires"], ["cone", "Voxel Data"], ["cone", "Dimensions"],
    ["gear", "Lumped Elements"], ["gear", "Plane Wave"], ["gear", "Farfield Sources"],
    ["gear", "Field Sources"], ["gear", "Ports"], ["gear", "Excitation Signals", true],
    ["gear", "Field Monitors", true], ["gear", "Voltage and Current Monitors"],
    ["gear", "Probes"], ["gear", "Mesh", true],
    ["wave", "1D Results"], ["wave", "2D/3D Results"], ["wave", "Farfields"], ["wave", "Tables"]
];

document.getElementById("tree").innerHTML = tree.map(([icon, name, open], i) => `
    <li>
        <span class="twig">${open ? `<button class="expander" aria-label="Expand ${name}"></button>` : ""}</span>
        <svg width="22" height="22"><use href="#folder-${icon}"/></svg>
        <span class="label${i === 0 ? " selected" : ""}">${name}</span>
    </li>`).join("");

// perspective projection of the working plane
function project(x, y) {
    const w = 1 - 0.002213 * x - 0.00188 * y;
    return [(1082 + 15.76 * x - 2.04 * y) / w, (515.4 + 2.44 * x - 20.72 * y) / w].map(v => v.toFixed(1)).join(" ");
}

const size = 15;
let lines = "";
for (let i = -size; i <= size; i++) {
    const cls = i === 0 ? ' class="main-axis"' : "";
    lines += `<path${cls} d="M${project(i, -size)}L${project(i, size)}M${project(-size, i)}L${project(size, i)}"/>`;
}
document.getElementById("grid").innerHTML = lines;
```
